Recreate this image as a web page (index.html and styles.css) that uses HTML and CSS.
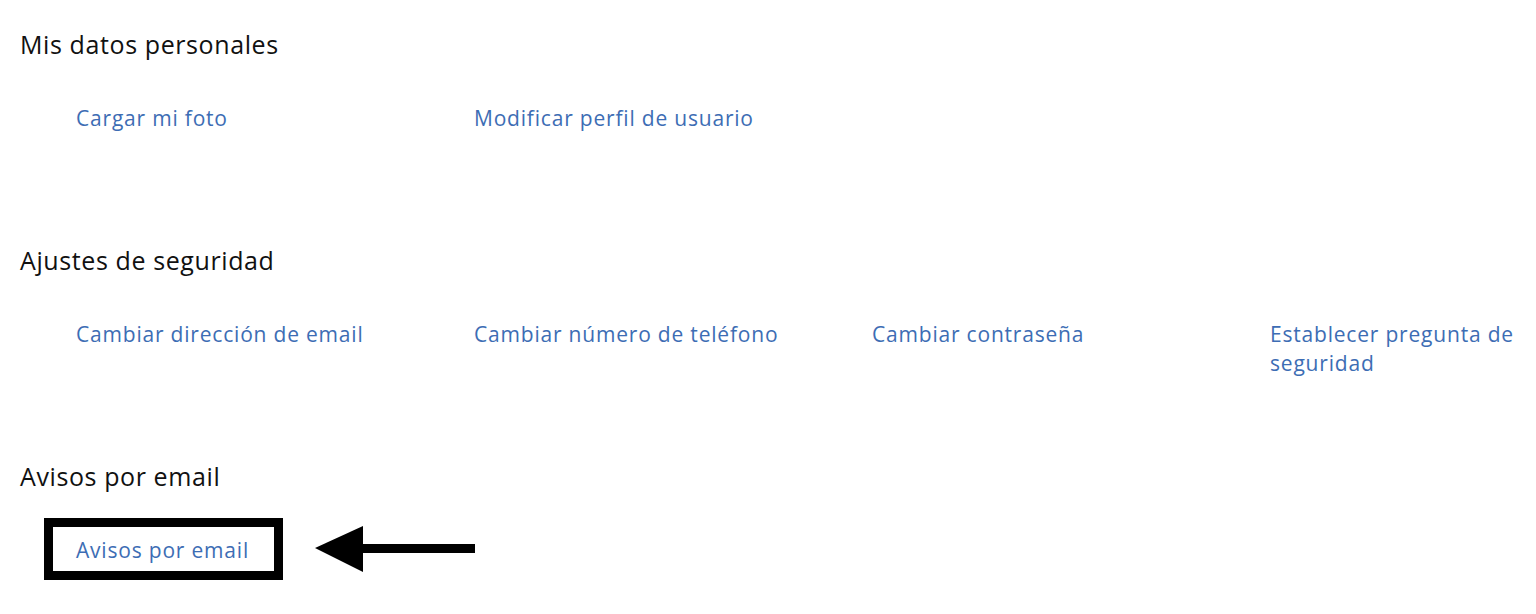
FILE: index.html
```html
<!DOCTYPE html>
<html lang="es">
<head>
<meta charset="utf-8">
<title>Mi cuenta</title>
<link rel="stylesheet" href="styles.css">
</head>
<body>
<main class="page">
  <section class="section">
    <h2 class="section-title">Mis datos personales</h2>
    <div class="links">
      <a class="link" href="#">Cargar mi foto</a>
      <a class="link" href="#">Modificar perfil de usuario</a>
    </div>
  </section>
  <section class="section">
    <h2 class="section-title">Ajustes de seguridad</h2>
    <div class="links">
      <a class="link" href="#">Cambiar dirección de email</a>
      <a class="link" href="#">Cambiar número de teléfono</a>
      <a class="link" href="#">Cambiar contraseña</a>
      <a class="link" href="#">Establecer pregunta de seguridad</a>
    </div>
  </section>
  <section class="section">
    <h2 class="section-title">Avisos por email</h2>
    <div class="links">
      <div class="highlighted">
        <a class="link" href="#">Avisos por email</a>
        <span class="highlight-box"></span>
        <svg class="arrow" width="160" height="46" viewBox="0 0 160 46" aria-hidden="true">
          <polygon points="0,22 48,0 48,46" fill="#000"/>
          <rect x="46" y="18" width="114" height="9" fill="#000"/>
        </svg>
      </div>
    </div>
  </section>
</main>
</body>
</html>
```
FILE: styles.css
```css
html, body {
  margin: 0;
  padding: 0;
  background: #ffffff;
}
body {
  font-family: "Open Sans", "Liberation Sans", sans-serif;
}
.page {
  box-sizing: border-box;
  height: 614px;
  overflow: hidden;
  padding: 28px 0 0 20px;
}
.section-title {
  margin: 0;
  font-size: 25px;
  letter-spacing: 0.6px;
  line-height: 32px;
  font-weight: 400;
  color: #111111;
}
.links {
  display: grid;
  grid-template-columns: 398px 398px 398px 1fr;
  margin: 44px 0 42px 56px;
  height: 98px;
  align-items: start;
}
.section:last-child .links {
  height: auto;
  margin-bottom: 0;
}
.link {
  font-size: 21px;
  letter-spacing: 0.8px;
  line-height: 29px;
  color: #3d6db4;
  text-decoration: none;
}
.highlighted {
  position: relative;
  justify-self: start;
}
.highlight-box {
  position: absolute;
  left: -32px;
  top: -18px;
  width: 239px;
  height: 62px;
  box-sizing: border-box;
  border: 9px solid #000000;
}
.arrow {
  position: absolute;
  left: 239px;
  top: -10px;
}
```
